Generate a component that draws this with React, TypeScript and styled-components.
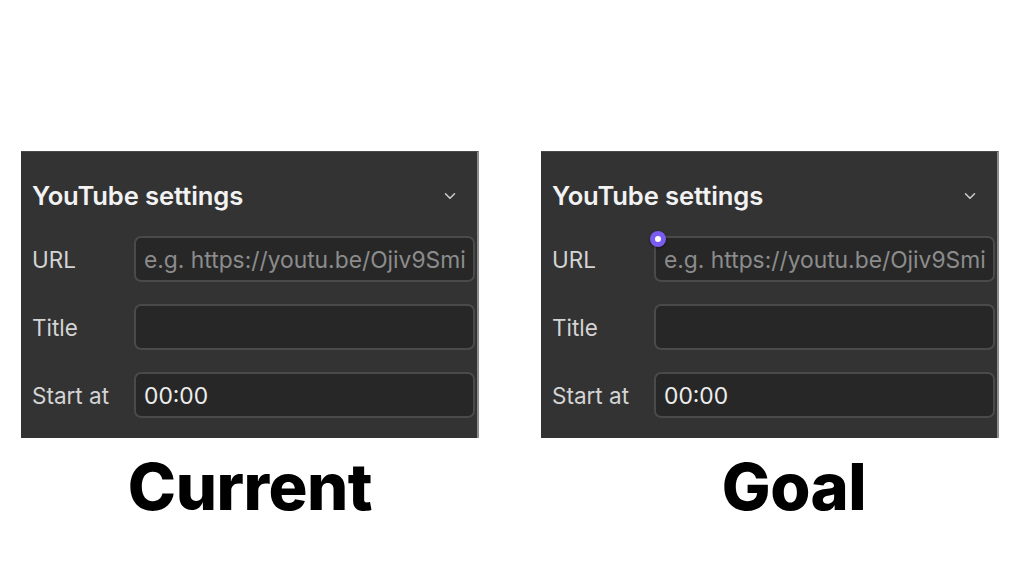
import styled, { createGlobalStyle } from "styled-components";
import { ChevronDown } from "lucide-react";

const GlobalStyle = createGlobalStyle`
  html, body {
    margin: 0;
    padding: 0;
    background: #ffffff;
    font-family: Inter, "Noto Sans", sans-serif;
  }
`;

const Page = styled.div`
  width: 1024px;
  height: 576px;
  display: flex;
  gap: 62px;
  padding: 151px 0 0 21px;
  box-sizing: border-box;
`;

const Column = styled.div`
  display: flex;
  flex-direction: column;
  align-items: center;
  width: 458px;
`;

const Panel = styled.div`
  position: relative;
  width: 458px;
  height: 287px;
  box-sizing: border-box;
  background-color: #333333;
  border-top: 1px solid #4a4a4a;
  border-right: 2px solid #8d8d8d;
  padding: 0 2px 0 11px;
  display: flex;
  flex-direction: column;
`;

const Header = styled.div`
  height: 84px;
  display: flex;
  align-items: center;
  justify-content: space-between;
  padding-right: 16px;
`;

const Title = styled.h2`
  margin: 0;
  font-size: 25.6px;
  font-weight: 600;
  color: #f2f2f2;
  letter-spacing: -0.1px;
  transform: translateY(1px);
`;

const Chevron = styled(ChevronDown)`
  color: #d0d0d0;
  transform: translateY(2px);
`;

const Rows = styled.div`
  display: flex;
  flex-direction: column;
  gap: 22px;
`;

const Row = styled.label`
  position: relative;
  display: grid;
  grid-template-columns: 102px 1fr;
  align-items: center;
`;

const Label = styled.span`
  font-size: 22.5px;
  color: #d4d4d4;
`;

const Field = styled.input`
  height: 46px;
  box-sizing: border-box;
  width: 100%;
  background: #272727;
  border: 2px solid #4a4a4a;
  border-radius: 7px;
  padding: 0 3px 0 8px;
  font-family: Inter, "Noto Sans", sans-serif;
  font-size: 22.8px;
  color: #ededed;
  outline: none;

  &::placeholder {
    color: #8c8c8c;
  }
`;

const Dot = styled.span`
  position: absolute;
  left: 98px;
  top: -5px;
  width: 16px;
  height: 16px;
  border-radius: 50%;
  background: #7b5cf0;
  box-shadow: 0 1px 3px rgba(0, 0, 0, 0.5);
  display: flex;
  align-items: center;
  justify-content: center;

  &::after {
    content: "";
    width: 6px;
    height: 6px;
    border-radius: 50%;
    background: #ffffff;
  }
`;

const Caption = styled.div<{ $shift?: number }>`
  margin-top: 16px;
  margin-left: ${(p) => (p.$shift ? `${p.$shift}px` : "0")};
  font-family: Inter, sans-serif;
  font-weight: 800;
  font-size: 65px;
  line-height: 1;
  color: #000000;
  letter-spacing: -0.5px;
`;

const SettingsPanel = ({ showDot }: { showDot: boolean }) => (
  <Panel>
    <Header>
      <Title>YouTube settings</Title>
      <Chevron size={18} strokeWidth={2} />
    </Header>
    <Rows>
      <Row>
        <Label>URL</Label>
        <Field placeholder="e.g. https://youtu.be/Ojiv9Smi" />
        {showDot && <Dot />}
      </Row>
      <Row>
        <Label>Title</Label>
        <Field />
      </Row>
      <Row>
        <Label>Start at</Label>
        <Field defaultValue="00:00" />
      </Row>
    </Rows>
  </Panel>
);

export default function App() {
  return (
    <>
      <GlobalStyle />
      <Page>
        <Column>
          <SettingsPanel showDot={false} />
          <Caption>Current</Caption>
        </Column>
        <Column>
          <SettingsPanel showDot={true} />
          <Caption $shift={48}>Goal</Caption>
        </Column>
      </Page>
    </>
  );
}
